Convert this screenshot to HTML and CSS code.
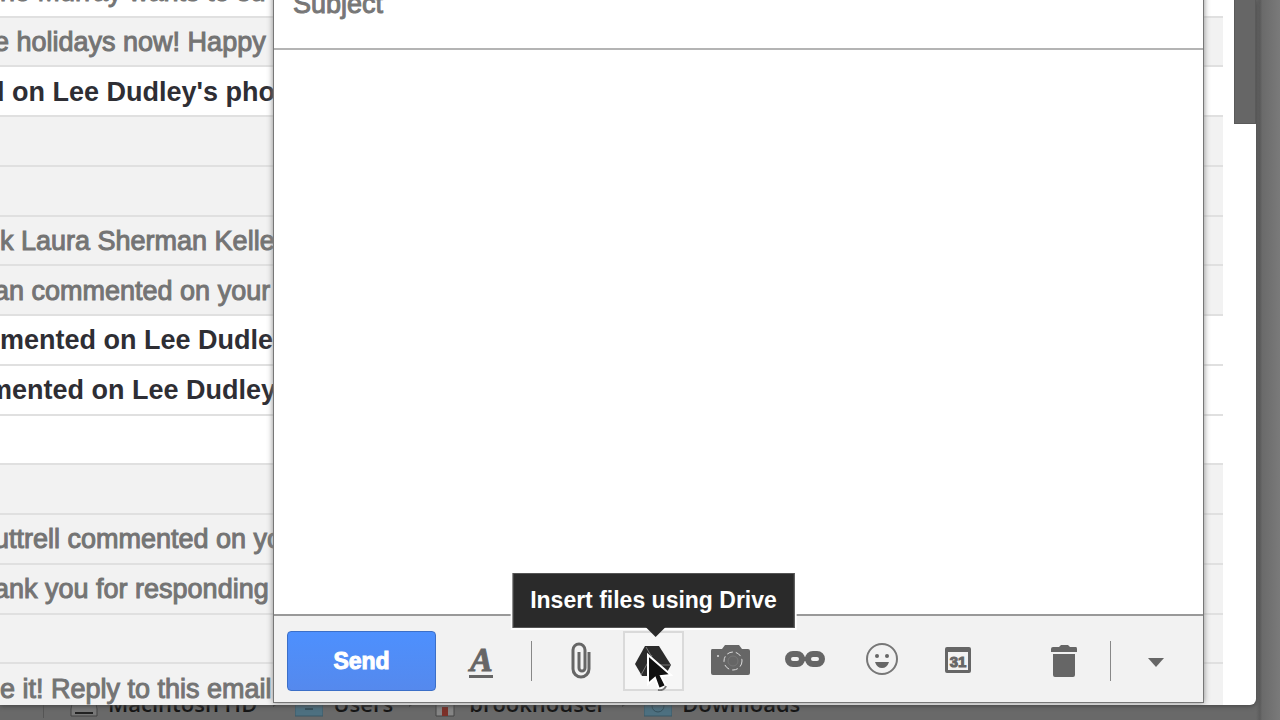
FILE: index.html
```
<!DOCTYPE html>
<html lang="en">
<head>
    <meta charset="utf-8">
    <title>Compose</title>
    <link rel="stylesheet" href="styles.css">
</head>
<body>
    <main class="window">
        <ul class="mails">
            <li class="mail unread plain">he Murray wants to su</li>
            <li class="mail cut">e holidays now! Happy</li>
            <li class="mail unread cutmore">d on Lee Dudley's photo</li>
            <li class="mail"></li>
            <li class="mail"></li>
            <li class="mail">k Laura Sherman Kelley</li>
            <li class="mail cut">an commented on your</li>
            <li class="mail unread">mented on Lee Dudley</li>
            <li class="mail unread cutmore">mented on Lee Dudley's</li>
            <li class="mail unread"></li>
            <li class="mail"></li>
            <li class="mail cut">uttrell commented on your</li>
            <li class="mail cut">ank you for responding</li>
            <li class="mail"></li>
            <li class="mail">e it! Reply to this email</li>
        </ul>
        <div class="scroll"><div class="thumb"></div></div>

        <form class="compose">
            <input class="subject" type="text" placeholder="Subject" aria-label="Subject">
            <textarea class="message" aria-label="Message"></textarea>
            <div class="toolbar">
                <button class="send" type="button">Send</button>
                <button class="tool format" type="button" aria-label="Formatting options">
                    <svg viewBox="0 0 60 60">
                        <text x="19" y="40" class="letter">A</text>
                        <rect x="18" y="44" width="24" height="3"/>
                    </svg>
                </button>
                <span class="line"></span>
                <button class="tool" type="button" aria-label="Attach files">
                    <svg viewBox="0 0 60 60">
                        <path class="stroke" d="M42 21v17a7.500 7.500 0 0 1-16 0V19a5.500 5.500 0 0 1 12 0v18a3 3 0 0 1-6 0V21"/>
                    </svg>
                </button>
                <button class="tool drive" type="button" aria-label="Insert files using Drive">
                    <svg viewBox="0 0 60 60">
                        <path d="M22 15h14l12 19-6 11H19l-7-12z" fill="#2b2b2b"/>
                        <path d="M23 16l11 19M29 24L18 44M30 34h18" fill="none" stroke="#777"/>
                        <path d="M25 24v29l7-6 4 11 7-3-5-10 10-1z" fill="#111" stroke="#fff" stroke-width="2"/>
                        <path d="M35 59q6 1 8-4" fill="none" stroke="#777" stroke-width="2"/>
                    </svg>
                    <span class="tip" role="tooltip">Insert files using Drive</span>
                </button>
                <button class="tool" type="button" aria-label="Insert photo">
                    <svg viewBox="0 0 60 60">
                        <path d="M13 18h10l3-4h14l3 4h6q2 0 2 2v22q0 2-2 2H14q-2 0-2-2V20q0-2 1-2z"/>
                        <circle cx="34" cy="30" r="9" fill="none" stroke="#ddd" stroke-dasharray="6 3"/>
                        <circle cx="34" cy="30" r="5" fill="none" stroke="#777"/>
                        <circle cx="19" cy="25" r="1" fill="#ddd"/>
                    </svg>
                </button>
                <button class="tool" type="button" aria-label="Insert link">
                    <svg viewBox="0 0 60 60">
                        <rect x="13" y="23" width="14" height="10" rx="5" fill="none" stroke="#666" stroke-width="6"/>
                        <rect x="33" y="23" width="14" height="10" rx="5" fill="none" stroke="#666" stroke-width="6"/>
                        <path d="M25 26h11v4H25z"/>
                    </svg>
                </button>
                <button class="tool" type="button" aria-label="Insert emoticon">
                    <svg viewBox="0 0 60 60">
                        <circle cx="31" cy="28" r="15" fill="none" stroke="#777" stroke-width="2"/>
                        <circle cx="26" cy="25" r="2"/>
                        <circle cx="36" cy="25" r="2"/>
                        <path d="M24 31h14q-2 6-7 6t-7-6z"/>
                    </svg>
                </button>
                <button class="tool" type="button" aria-label="Insert invitation">
                    <svg viewBox="0 0 60 60">
                        <path fill-rule="evenodd" d="M20 16h22q2 0 2 2v22q0 2-2 2H20q-2 0-2-2V18q0-2 2-2zM21 21v18h20V21z"/>
                        <text x="31" y="36" class="day">31</text>
                    </svg>
                </button>
                <span class="space"></span>
                <button class="tool" type="button" aria-label="Discard draft">
                    <svg viewBox="0 0 60 60">
                        <path d="M19 16h6l2-2h7l2 2h6q1 0 1 2v3H17v-3q0-2 2-2zM19 23h22v21q0 2-2 2H21q-2 0-2-2z"/>
                    </svg>
                </button>
                <span class="line"></span>
                <button class="tool" type="button" aria-label="More options">
                    <svg viewBox="0 0 60 60">
                        <path d="M22 27h16l-8 9z"/>
                    </svg>
                </button>
            </div>
        </form>
    </main>

    <!-- Finder path bar, partly behind the browser window -->
    <nav class="path">
        <a class="place" href="#">
            <svg viewBox="0 0 28 28"><path d="M4 4h20l3 16v7H1v-7z" fill="#777" stroke="#444"/><path d="M5 24h18" stroke="#222" stroke-width="2"/></svg>
            Macintosh HD
        </a>
        <span class="arrow"></span>
        <a class="place" href="#">
            <svg viewBox="0 0 28 28"><path d="M0 3h28v24H0z" fill="#4d7080" stroke="#3a5866"/><path d="M10 20h8" stroke="#35505c" stroke-width="2"/></svg>
            Users
        </a>
        <span class="arrow"></span>
        <a class="place" href="#">
            <svg viewBox="0 0 28 28"><path d="M5 10h18v17H5z" fill="#858585" stroke="#444"/><path d="M11 18h6v9h-6z" fill="#7c3028"/></svg>
            brookhouser
        </a>
        <span class="arrow"></span>
        <a class="place" href="#">
            <svg viewBox="0 0 28 28"><path d="M0 3h28v24H0z" fill="#4d7080" stroke="#3a5866"/><circle cx="14" cy="17" r="6" fill="none" stroke="#35505c"/></svg>
            Downloads
        </a>
    </nav>
</body>
</html>
```
FILE: styles.css
```
* {
    box-sizing: border-box;
}
body {
    margin: 0;
    height: 100vh;
    overflow: hidden;
    background: linear-gradient(to left, #7a7a7a, #6a6a6a 18px, #5c5c5c 20px, #696969 24px);
    font-family: "Liberation Sans", Arial, sans-serif;
}
button, input, textarea {
    font-family: inherit;
}
.window {
    position: relative;
    z-index: 1;
    display: flex;
    height: calc(100vh - 15px);
    margin-right: 24px;
    overflow: hidden;
    background: #fff;
    border-radius: 0 0 6px 0;
    box-shadow: 0 1px 5px #444;
}

/* mail list */
.mails {
    flex: 1;
    display: grid;
    grid-template-rows: repeat(15, 1fr);
    height: calc(100% + 41px);
    margin: -32px 0 0;
    padding: 0;
    list-style: none;
}
.mail {
    display: flex;
    align-items: center;
    padding-top: 2px;
    overflow: hidden;
    white-space: nowrap;
    background: #f2f2f2;
    border-bottom: 2px solid #e0e0e0;
    color: #747474;
    font-size: 27px;
    -webkit-text-stroke: 1px #747474;
}
.unread {
    background: #fff;
    color: #2e2e34;
    font-weight: bold;
    -webkit-text-stroke: 0;
}
.plain {
    color: #747474;
    font-weight: normal;
    -webkit-text-stroke: 1px #747474;
}
.cut {
    text-indent: -6px;
}
.cutmore {
    text-indent: -12px;
}
.scroll {
    width: 33px;
    padding-left: 11px;
}
.thumb {
    height: 124px;
    background: #666;
    border: 1px solid #5a5a5a;
    border-top: none;
}

/* compose box */
.compose {
    position: absolute;
    top: -41px;
    bottom: 2px;
    left: 273px;
    right: 52px;
    display: flex;
    flex-direction: column;
    background: #fff;
    border: 1px solid #777;
    box-shadow: 0 0 6px #888;
}
.subject {
    height: 90px;
    padding: 0 19px;
    border: none;
    border-bottom: 2px solid #b4b4b4;
    background: none;
    font-size: 27px;
}
.subject::placeholder {
    color: #777;
    -webkit-text-stroke: 1px #777;
}
.message {
    flex: 1;
    border: none;
    resize: none;
    font-size: 27px;
}
.toolbar {
    display: flex;
    align-items: center;
    gap: 15px;
    height: 88px;
    padding: 4px 16px 0 13px;
    background: #f2f2f2;
    border-top: 2px solid #999;
}
.send {
    width: 149px;
    height: 60px;
    border: 1px solid #3b6fc8;
    border-radius: 4px;
    background: linear-gradient(#4d90fe, #5589ed);
    color: #fff;
    font-size: 23px;
    font-weight: bold;
    -webkit-text-stroke: 1px #fff;
}
.tool {
    position: relative;
    flex: none;
    width: 61px;
    height: 60px;
    padding: 0;
    border: none;
    background: none;
}
.tool svg {
    display: block;
    width: 60px;
    height: 60px;
    fill: #666;
}
.format {
    margin-right: 4px;
}
.letter {
    font: italic bold 34px "Liberation Serif", serif;
    stroke: #666;
}
.stroke {
    fill: none;
    stroke: #666;
    stroke-width: 3;
}
.day {
    font: bold 15px "Liberation Sans", sans-serif;
    text-anchor: middle;
    stroke: #666;
}
.line {
    width: 1px;
    height: 40px;
    background: #888;
}
.space {
    flex: 1;
}
.drive {
    background: #f6f6f6;
    box-shadow: inset 0 0 0 2px #dadada;
}
.tip {
    position: absolute;
    bottom: 63px;
    left: 50%;
    padding: 0 17px;
    transform: translateX(-50%);
    border: 1px solid #555;
    background: #2a2a2a;
    color: #fff;
    font-size: 23px;
    font-weight: bold;
    line-height: 53px;
    white-space: nowrap;
    box-shadow: 0 0 0 2px #fff;
}
.tip::after {
    content: "";
    position: absolute;
    top: 100%;
    left: 50%;
    margin-left: -8px;
    border: 10px solid transparent;
    border-top-color: #2a2a2a;
    border-bottom: none;
}

/* path bar */
.path {
    display: flex;
    align-items: center;
    gap: 16px;
    height: 30px;
    margin: -17px 0 0 43px;
    padding-left: 26px;
    border-left: 1px solid #555;
}
.place {
    display: flex;
    align-items: center;
    gap: 10px;
    color: #151515;
    font-family: "Open Sans", sans-serif;
    font-size: 22px;
    font-weight: 600;
    text-decoration: none;
}
.place svg {
    width: 28px;
    height: 28px;
}
.arrow {
    border: 4px solid transparent;
    border-left: 6px solid #3c3c3c;
    border-right: none;
}
```
